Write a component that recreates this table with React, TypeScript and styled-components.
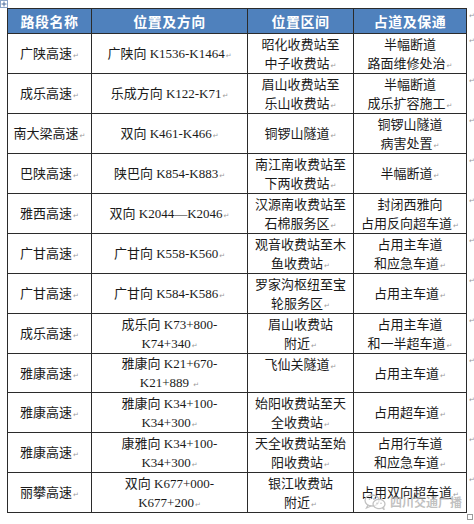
import React from 'react';
import styled, { createGlobalStyle } from 'styled-components';

const GlobalStyle = createGlobalStyle`
  html, body {
    margin: 0;
    padding: 0;
    background: #fff;
  }
  body {
    font-family: "Liberation Serif", "Noto Sans CJK SC", serif;
    color: #1a1a1a;
  }
`;

type Row = {
  road: string;
  pos: string[];
  range: string[];
  lane: string[];
  rangeTop?: boolean;
  height?: number;
};

const rows: Row[] = [
  { road: '广陕高速', pos: ['广陕向 K1536-K1464'], range: ['昭化收费站至', '中子收费站'], lane: ['半幅断道', '路面维修处治'] },
  { road: '成乐高速', pos: ['乐成方向 K122-K71'], range: ['眉山收费站至', '乐山收费站'], lane: ['半幅断道', '成乐扩容施工'] },
  { road: '南大梁高速', pos: ['双向 K461-K466'], range: ['铜锣山隧道'], lane: ['铜锣山隧道', '病害处置'] },
  { road: '巴陕高速', pos: ['陕巴向 K854-K883'], range: ['南江南收费站至', '下两收费站'], lane: ['半幅断道'] },
  { road: '雅西高速', pos: ['双向 K2044—K2046'], range: ['汉源南收费站至', '石棉服务区'], lane: ['封闭西雅向', '占用反向超车道'] },
  { road: '广甘高速', pos: ['广甘向 K558-K560'], range: ['观音收费站至木', '鱼收费站'], lane: ['占用主车道', '和应急车道'] },
  { road: '广甘高速', pos: ['广甘向 K584-K586'], range: ['罗家沟枢纽至宝', '轮服务区'], lane: ['占用主车道'] },
  { road: '成乐高速', pos: ['成乐向 K73+800-', 'K74+340'], range: ['眉山收费站', '附近'], lane: ['占用主车道', '和一半超车道'] },
  { road: '雅康高速', pos: ['雅康向 K21+670-', 'K21+889 '], range: ['飞仙关隧道'], rangeTop: true, lane: ['占用主车道'], height: 39 },
  { road: '雅康高速', pos: ['雅康向 K34+100-', 'K34+300'], range: ['始阳收费站至天', '全收费站'], lane: ['占用超车道'] },
  { road: '雅康高速', pos: ['康雅向 K34+100-', 'K34+300'], range: ['天全收费站至始', '阳收费站'], lane: ['占用行车道', '和应急车道'] },
  { road: '丽攀高速', pos: ['双向 K677+000-', 'K677+200'], range: ['银江收费站', '附近'], lane: ['占用双向超车道'] },
];

const headers = ['路段名称', '位置及方向', '位置区间', '占道及保通'];
const widths = [84, 156, 106, 113, 8];

function Lines({ lines }: { lines: string[] }) {
  return (
    <>
      {lines.map((l, i) => (
        <Line key={i}>
          {l}
          {i === lines.length - 1 && <Mark>↵</Mark>}
        </Line>
      ))}
    </>
  );
}

function WeChatIcon() {
  return (
    <svg width="22" height="16" viewBox="0 0 22 16">
      <g fill="none" stroke="#c2c2c2" strokeWidth="1.3">
        <ellipse cx="8" cy="6.5" rx="7" ry="5.5" />
        <path d="M4 11 L2.5 14 L7 12" />
        <ellipse cx="15" cy="10" rx="6" ry="4.6" fill="rgba(255,255,255,0.6)" />
        <path d="M18.5 14 L20 15.5 L19.5 13" />
      </g>
      <g fill="#c2c2c2">
        <circle cx="5.5" cy="5" r="0.9" />
        <circle cx="10" cy="5" r="0.9" />
        <circle cx="13" cy="9.3" r="0.8" />
        <circle cx="17" cy="9.3" r="0.8" />
      </g>
    </svg>
  );
}

export default function App() {
  return (
    <Page>
      <GlobalStyle />
      <Handle>
        <svg width="8" height="8" viewBox="0 0 8 8">
          <rect x="0.5" y="0.5" width="7" height="7" fill="#fff" stroke="#8aa4c8" />
          <path d="M4 1.5 V6.5 M1.5 4 H6.5" stroke="#4d6f9f" strokeWidth="1" />
        </svg>
      </Handle>
      <Table>
        <colgroup>
          {widths.map((w, i) => (
            <col key={i} style={{ width: w }} />
          ))}
        </colgroup>
        <thead>
          <tr>
            {headers.map((h) => (
              <HeadCell key={h}>{h}</HeadCell>
            ))}
            <EndCell>↵</EndCell>
          </tr>
        </thead>
        <tbody>
          {rows.map((r, i) => (
            <BodyRow key={i} $h={r.height ?? 40}>
              <Cell>
                <Lines lines={[r.road]} />
              </Cell>
              <Cell>
                <Lines lines={r.pos} />
              </Cell>
              <Cell $top={r.rangeTop}>
                <Lines lines={r.range} />
              </Cell>
              <Cell>
                <Lines lines={r.lane} />
              </Cell>
              <EndCell>↵</EndCell>
            </BodyRow>
          ))}
        </tbody>
      </Table>
      <Watermark>
        <WeChatIcon />
        <span>四川交通广播</span>
      </Watermark>
      <Corner />
    </Page>
  );
}

const Page = styled.div`
  position: relative;
  width: 474px;
  height: 524px;
  padding: 8px 0 0 7px;
  box-sizing: border-box;
  overflow: hidden;
`;

const Handle = styled.div`
  position: absolute;
  left: 0;
  top: 0;
  line-height: 0;
`;

const Table = styled.table`
  border-collapse: collapse;
  table-layout: fixed;
  width: 467px;
`;

const HeadCell = styled.th`
  height: 24px;
  padding: 0;
  background: #4f81bd;
  color: #fff;
  border: 1px solid #2b2b2b;
  font-family: "Noto Sans CJK SC", sans-serif;
  font-size: 14px;
  line-height: 18px;
  font-weight: 700;
  letter-spacing: 0.5px;
  text-align: center;
  vertical-align: middle;
  overflow: hidden;
`;

const BodyRow = styled.tr<{ $h: number }>`
  height: ${({ $h }) => $h}px;
`;

const Cell = styled.td<{ $top?: boolean }>`
  padding: ${({ $top }) => ($top ? '1px 0 0' : '0')};
  border: 1px solid #2b2b2b;
  font-size: 13px;
  text-align: center;
  vertical-align: ${({ $top }) => ($top ? 'top' : 'middle')};
  white-space: nowrap;
`;

const EndCell = styled.td`
  padding: 2px 0 0 2px;
  border: none;
  vertical-align: top;
  font-family: "DejaVu Sans", sans-serif;
  font-size: 7px;
  line-height: 10px;
  color: #9a9a9a;
  text-align: left;
`;

const Line = styled.div`
  height: 19px;
  line-height: 19px;
  overflow: visible;
`;

const Mark = styled.span`
  font-family: "DejaVu Sans", sans-serif;
  font-size: 7px;
  line-height: 0;
  color: #9a9a9a;
  margin-left: 1px;
`;

const Watermark = styled.div`
  position: absolute;
  left: 364px;
  top: 494px;
  display: flex;
  align-items: center;
  gap: 4px;
  font-family: "Noto Sans CJK SC", sans-serif;
  font-size: 12px;
  line-height: 16px;
  font-weight: 700;
  color: rgba(165, 165, 165, 0.7);
  pointer-events: none;
`;

const Corner = styled.div`
  position: absolute;
  left: 467px;
  top: 514px;
  width: 4px;
  height: 4px;
  border: 1px solid #9a9a9a;
  background: #fff;
`;
